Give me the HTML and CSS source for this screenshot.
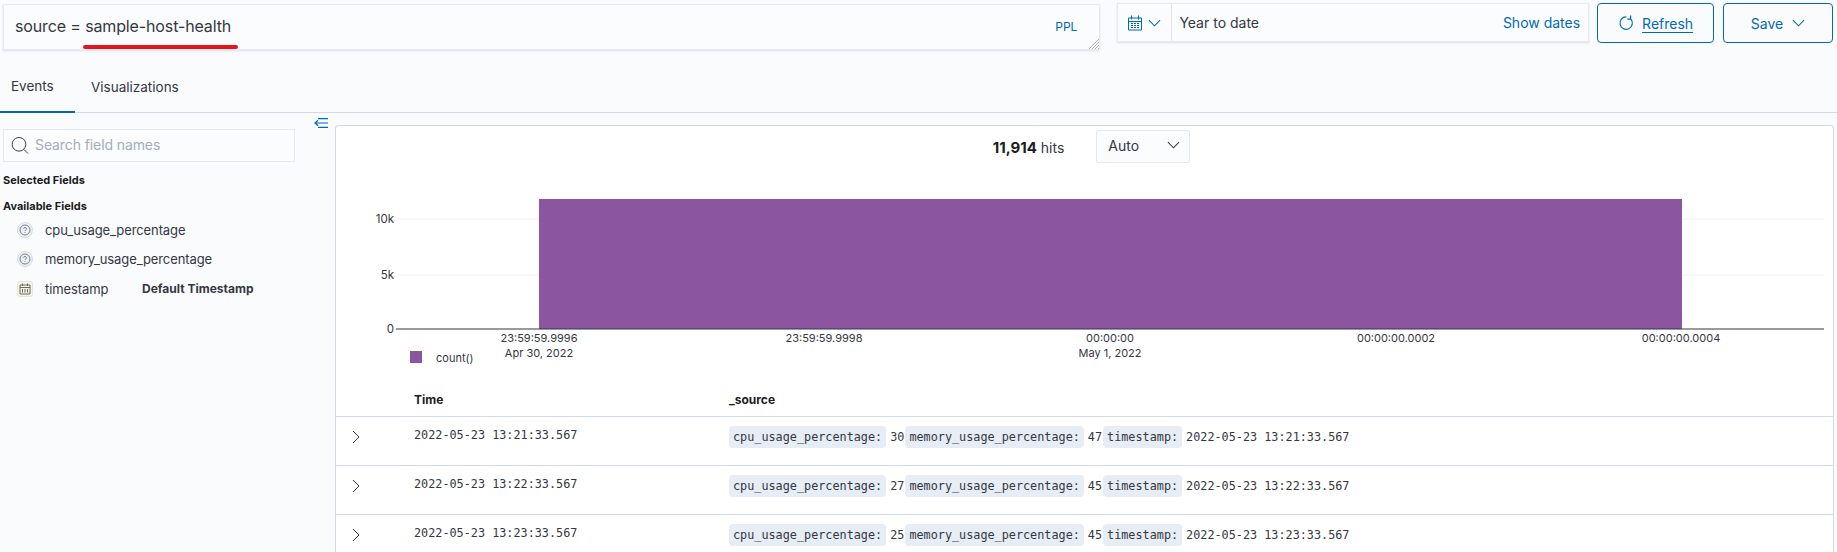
FILE: index.html
```html
<!DOCTYPE html>
<html lang="en">
<head>
<meta charset="utf-8">
<title>Event analytics</title>
<link rel="stylesheet" href="styles.css">
</head>
<body>
<header class="topbar">
  <div class="query">
    <span class="query-text">source = sample-host-health</span>
    <span class="query-mark"></span>
    <span class="ppl">PPL</span>
    <svg class="grip" viewBox="0 0 10 10"><path d="M0 10 10 0M3 10l7-7M6 10l4-4M9 10l1-1"/></svg>
  </div>
  <div class="datepicker">
    <div class="quick">
      <svg class="i16" viewBox="0 0 16 16"><path class="blue-s" d="M1.5 3h13v12h-13zM1.5 6.5h13M4.5 .5v4M11.5 .5v4"/><path class="blue-s dots" d="M4 8.5h2M7 8.5h2M10 8.5h2M4 10.5h2M7 10.5h2M10 10.5h2M4 12.5h2M7 12.5h2M10 12.5h2"/></svg>
      <svg class="chev" viewBox="0 0 14 8"><path class="blue-s heavy" d="M1 1l6 6 6-6"/></svg>
    </div>
    <div class="range">
      <span>Year to date</span>
      <span class="link">Show dates</span>
    </div>
  </div>
  <button class="btn btn-refresh">
    <svg class="i16" viewBox="0 0 16 16"><path class="blue-s heavy" d="M13 4.2A6.2 6.2 0 1 1 8.4 1.9M12.6 .6v3.6H9.2"/></svg>
    <span class="under">Refresh</span>
  </button>
  <button class="btn btn-save">
    <span>Save</span>
    <svg class="chev" viewBox="0 0 14 8"><path class="blue-s heavy" d="M1 1l6 6 6-6"/></svg>
  </button>
</header>

<nav class="tabs">
  <span class="tab tab-on">Events</span>
  <span class="tab">Visualizations</span>
</nav>

<div class="content">
  <aside class="side">
    <div class="collapse">
      <svg class="collapse-icon" viewBox="0 0 14 10"><path class="blue-s heavy" d="M4 .6h10M1.2 5H14M4 9.4h10M4 2.2 1 5l3 2.8"/></svg>
    </div>
    <div class="search">
      <svg class="search-icon" viewBox="0 0 18 18"><path d="M8 1.5a6.8 6.8 0 1 0 .01 0zM13 13.5l4 4"/></svg>
      <span>Search field names</span>
    </div>
    <h4 class="side-title">Selected Fields</h4>
    <h4 class="side-title avail">Available Fields</h4>
    <ul class="fields">
      <li class="field">
        <svg class="token" viewBox="0 0 16 16"><circle class="tok-bg" cx="8" cy="8" r="7.5"/><circle class="tok-s" cx="8" cy="8" r="5"/><path class="tok-s" d="M6.5 6.8C6.6 5 9.5 5 9.5 6.8c0 1.1-1.5 1.1-1.5 2.2M8 10v.8"/></svg>
        <span>cpu_usage_percentage</span>
      </li>
      <li class="field">
        <svg class="token" viewBox="0 0 16 16"><circle class="tok-bg" cx="8" cy="8" r="7.5"/><circle class="tok-s" cx="8" cy="8" r="5"/><path class="tok-s" d="M6.5 6.8C6.6 5 9.5 5 9.5 6.8c0 1.1-1.5 1.1-1.5 2.2M8 10v.8"/></svg>
        <span>memory_usage_percentage</span>
      </li>
      <li class="field">
        <svg class="token" viewBox="0 0 16 16"><rect class="date-bg" x=".5" y=".5" width="15" height="15" rx="2"/><path class="date-s" d="M3 4h10v9H3zM3 6.5h10M5.5 2.5v2.5M10.5 2.5v2.5M5.5 8v3.5M8 8v3.5M10.5 8v3.5"/></svg>
        <span class="field-name">timestamp</span>
        <strong class="default">Default Timestamp</strong>
      </li>
    </ul>
  </aside>

  <main class="panel">
    <div class="hits-row">
      <span class="hits"><b>11,914</b> hits</span>
      <div class="select">
        <span>Auto</span>
        <svg class="chev dark" viewBox="0 0 14 8"><path d="M1 1l6 6 6-6"/></svg>
      </div>
    </div>

    <svg class="chart" width="1498" height="220" viewBox="336 163 1498 220">
      <g class="grid">
        <path d="M398 219H1824M398 275H1824"/>
      </g>
      <rect class="bar" x="539" y="199" width="1143" height="130"/>
      <path class="axis" d="M396 329H1824"/>
      <g class="ylab">
        <text x="394" y="223">10k</text>
        <text x="394" y="279">5k</text>
        <text x="394" y="333">0</text>
      </g>
      <g class="xlab">
        <text x="539" y="342">23:59:59.9996</text>
        <text x="539" y="357">Apr 30, 2022</text>
        <text x="824" y="342">23:59:59.9998</text>
        <text x="1110" y="342">00:00:00</text>
        <text x="1110" y="357">May 1, 2022</text>
        <text x="1396" y="342">00:00:00.0002</text>
        <text x="1681" y="342">00:00:00.0004</text>
      </g>
      <rect class="bar" x="410" y="351" width="12" height="12"/>
      <text class="legend" x="436" y="362">count()</text>
    </svg>

    <div class="thead">
      <span class="th-time">Time</span>
      <span>_source</span>
    </div>

    <div class="row">
      <svg class="expand" viewBox="0 0 8 14"><path d="M1 1l6 6-6 6"/></svg>
      <span class="time">2022-05-23 13:21:33.567</span>
      <div class="src"><span class="tag">cpu_usage_percentage:</span><span class="val">30</span><span class="tag">memory_usage_percentage:</span><span class="val">47</span><span class="tag">timestamp:</span><span class="val">2022-05-23 13:21:33.567</span></div>
    </div>
    <div class="row">
      <svg class="expand" viewBox="0 0 8 14"><path d="M1 1l6 6-6 6"/></svg>
      <span class="time">2022-05-23 13:22:33.567</span>
      <div class="src"><span class="tag">cpu_usage_percentage:</span><span class="val">27</span><span class="tag">memory_usage_percentage:</span><span class="val">45</span><span class="tag">timestamp:</span><span class="val">2022-05-23 13:22:33.567</span></div>
    </div>
    <div class="row">
      <svg class="expand" viewBox="0 0 8 14"><path d="M1 1l6 6-6 6"/></svg>
      <span class="time">2022-05-23 13:23:33.567</span>
      <div class="src"><span class="tag">cpu_usage_percentage:</span><span class="val">25</span><span class="tag">memory_usage_percentage:</span><span class="val">45</span><span class="tag">timestamp:</span><span class="val">2022-05-23 13:23:33.567</span></div>
    </div>
  </main>
</div>
</body>
</html>
```

FILE: styles.css
```css
* { box-sizing: border-box; }
html, body { margin: 0; height: 552px; overflow: hidden; }
body {
  background: #fafbfd;
  color: #343741;
  font-family: Inter, "Noto Sans", sans-serif;
  font-size: 14px;
}
svg { display: block; flex: none; fill: none; }
.blue-s { stroke: #006bb4; stroke-width: 1; }
.heavy { stroke-width: 1.2; }
.dots { stroke-width: 1.2; }
.i16 { width: 16px; height: 16px; }
.chev { width: 13px; height: 8px; }
.chev.dark path { stroke: #343741; stroke-width: 1.1; }

.topbar {
  display: flex;
  align-items: flex-start;
  height: 69px;
  padding: 3px 4px 0 3px;
}
.query {
  position: relative;
  display: flex;
  align-items: center;
  justify-content: space-between;
  width: 1098px;
  height: 46px;
  margin-top: 1px;
  padding: 0 22px 2px 11px;
  background: #fbfcfd;
  border: 1px solid #e6ebf2;
  box-shadow: 0 1px 2px rgba(152,162,179,.3);
  font-size: 16px;
  letter-spacing: -.13px;
}
.query-mark {
  position: absolute;
  left: 79px;
  top: 40px;
  width: 155px;
  height: 4px;
  background: #e3141c;
  border-radius: 2px;
}
.ppl { color: #006bb4; font-size: 12px; font-weight: 400; letter-spacing: 0; }
.grip { position: absolute; right: 0; bottom: 0; width: 10px; height: 10px; }
.grip path { stroke: #98a2b3; stroke-width: .8; }

.datepicker {
  display: flex;
  width: 472px;
  height: 39px;
  margin-left: 17px;
  background: #fbfcfd;
  border: 1px solid #e6ebf2;
  box-shadow: 0 1px 2px rgba(152,162,179,.3);
}
.quick {
  display: flex;
  align-items: center;
  gap: 5px;
  width: 54px;
  padding-left: 9px;
  border-right: 1px solid #e0e5ee;
}
.range {
  flex: 1;
  display: flex;
  align-items: center;
  justify-content: space-between;
  padding: 0 8px 0 7px;
}
.link { color: #006bb4; }

.btn {
  display: flex;
  align-items: center;
  justify-content: center;
  height: 40px;
  background: transparent;
  border: 1px solid #006bb4;
  border-radius: 4px;
  color: #006bb4;
  font: inherit;
  padding: 0;
}
.btn-refresh { width: 117px; margin-left: 8px; gap: 8px; }
.under { text-decoration: underline; text-underline-offset: 3px; }
.btn-save { width: 110px; margin-left: 9px; gap: 9px; }

.tabs {
  display: flex;
  height: 44px;
  border-bottom: 1px solid #d3dae6;
  font-size: 13.5px;
}
.tab {
  display: flex;
  align-items: center;
  height: 44px;
  padding: 0 11px 9px 11px;
  margin-right: 5px;
}
.tab-on {
  width: 75px;
  border-bottom: 2px solid #006bb4;
}

.content { display: flex; align-items: flex-start; }
.side {
  position: relative;
  width: 335px;
  flex: none;
  padding: 16px 0 0 3px;
}
.collapse { position: absolute; top: 5px; left: 314px; }
.collapse-icon { width: 14px; height: 10px; }
.search {
  display: flex;
  align-items: center;
  gap: 6px;
  width: 292px;
  height: 33px;
  padding: 0 0 2px 7px;
  border: 1px solid #e4e8f0;
  background: #fbfcfd;
  color: #a3adbd;
  letter-spacing: -.1px;
}
.search-icon { width: 18px; height: 18px; }
.search-icon path { stroke: #343741; stroke-width: 1; }
.side-title {
  margin: 11px 0 0;
  font-size: 11px;
  line-height: 14px;
  font-weight: 700;
  color: #1a1c21;
}
.avail { margin-top: 12px; }
.fields { list-style: none; margin: 2px 0 0; padding: 0 0 0 14px; }
.field {
  display: flex;
  align-items: center;
  gap: 12px;
  height: 29.5px;
  font-size: 13px;
  letter-spacing: -.1px;
}
.token { width: 16px; height: 16px; }
.tok-bg { fill: #eceff4; stroke: #d8dce4; stroke-width: 1; }
.tok-s { stroke: #7d8490; stroke-width: 1; }
.date-bg { fill: #f8f3e8; stroke: #e8e3d6; stroke-width: 1; }
.date-s { stroke: #6a6a5e; stroke-width: 1; }
.field-name { width: 85px; }
.default { font-size: 12px; font-weight: 700; margin-top: -1px; letter-spacing: 0; }

.panel {
  flex: 1;
  min-width: 0;
  height: 440px;
  margin: 12px 3px 0 0;
  background: #fff;
  border: 1px solid #d3dae6;
  border-bottom: 0;
  border-radius: 4px 4px 0 0;
  overflow: hidden;
}
.hits-row {
  display: flex;
  align-items: center;
  justify-content: center;
  gap: 32px;
  height: 37px;
  padding: 4px 0 0 14px;
}
.hits { margin-top: 2px; }
.hits b { font-size: 15px; font-weight: 700; color: #1a1c21; }
.select {
  display: flex;
  align-items: center;
  justify-content: space-between;
  width: 94px;
  height: 33px;
  padding: 0 9px 3px 11px;
  border: 1px solid #e4e8f0;
  border-radius: 2px;
  background: #fbfcfd;
}

.chart text { font-family: Inter, "Noto Sans", sans-serif; font-size: 11px; fill: #343741; }
.chart .ylab text { font-size: 11.5px; }
.grid path { stroke: #eef0f4; stroke-width: 1; }
.bar { fill: #8c55a0; }
.axis { stroke: #343741; stroke-width: 1; }
.ylab text { text-anchor: end; }
.xlab text { text-anchor: middle; }

.thead {
  display: flex;
  align-items: center;
  height: 34px;
  padding-left: 78px;
  font-size: 12px;
  font-weight: 700;
  color: #1a1c21;
  border-bottom: 1px solid #d3dae6;
}
.th-time { width: 315px; }
.row {
  display: flex;
  align-items: flex-start;
  height: 49px;
  padding-left: 16px;
  border-bottom: 1px solid #d3dae6;
  font-family: "DejaVu Sans Mono", "Liberation Mono", monospace;
  font-size: 11.8px;
}
.expand { width: 8px; height: 14px; margin-top: 13px; }
.expand path { stroke: #343741; stroke-width: 1; }
.time { width: 315px; margin-left: 54px; margin-top: 10px; line-height: 16px; }
.src { display: flex; align-items: center; margin-top: 9px; height: 22px; }
.tag {
  height: 22px;
  line-height: 22px;
  padding: 0 4px;
  background: #e6edf4;
  border-radius: 4px;
  white-space: pre;
}
.val { padding: 0 1px 0 4px; white-space: pre; }
```
